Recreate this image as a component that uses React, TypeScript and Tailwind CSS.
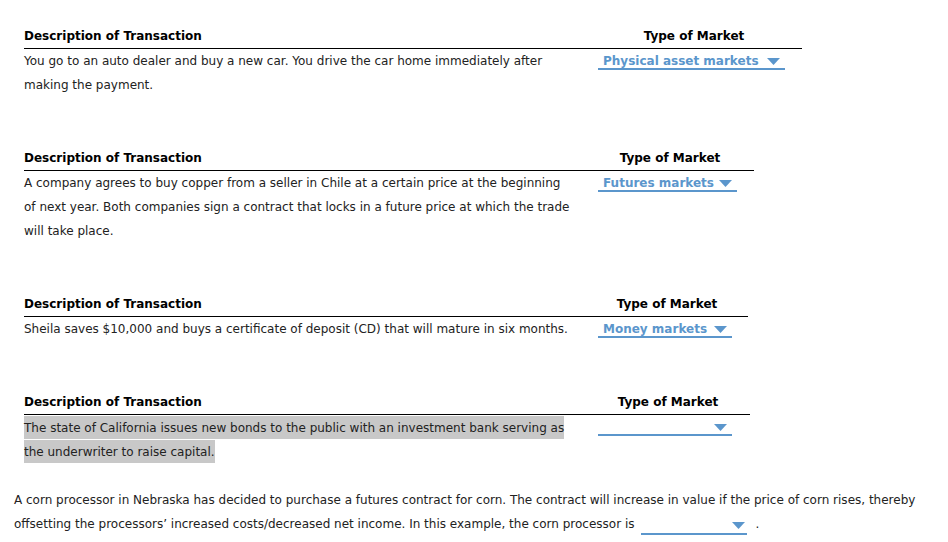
import React from 'react';

const Arrow = () => (
  <svg width="13" height="7" viewBox="0 0 13 7" className="shrink-0">
    <path d="M0 0 H13 L6.5 7 Z" fill="#5b96cc" />
  </svg>
);

interface DropProps {
  value?: string;
  width: string;
}

const Dropdown: React.FC<DropProps> = ({ value, width }) => (
  <div
    className={`mt-[5px] flex h-[16px] items-center justify-between border-b-2 border-[#5b96cc] pl-[5px] pr-[5px] ${width}`}
  >
    <span className="font-bold leading-[14px] text-[#5b96cc]">{value ?? ''}</span>
    <Arrow />
  </div>
);

interface TableProps {
  width: string;
  dropWidth: string;
  value?: string;
  className?: string;
  children: React.ReactNode;
}

const MarketTable: React.FC<TableProps> = ({ width, dropWidth, value, className = '', children }) => (
  <div className={`ml-[10px] ${width} ${className}`}>
    <div className="flex border-b border-black font-bold leading-[24px] text-black">
      <div className="w-[562px]">Description of Transaction</div>
      <div className="flex-1 text-center">Type of Market</div>
    </div>
    <div className="flex">
      <div className="w-[562px] pr-[12px] leading-[24px]">{children}</div>
      <div className="flex-1 pl-[12px]">
        <Dropdown value={value} width={dropWidth} />
      </div>
    </div>
  </div>
);

export default function App() {
  return (
    <div className="h-[542px] w-[948px] overflow-hidden bg-white pl-[14px] pt-[24px] font-['DejaVu_Sans',Verdana,sans-serif] text-[12px] text-[#222]">
      <MarketTable width="w-[778px]" dropWidth="w-[187px]" value="Physical asset markets">
        You go to an auto dealer and buy a new car. You drive the car home immediately after making the payment.
      </MarketTable>

      <MarketTable width="w-[730px]" dropWidth="w-[139px]" value="Futures markets" className="mt-[49px]">
        A company agrees to buy copper from a seller in Chile at a certain price at the beginning of next year. Both
        companies sign a contract that locks in a future price at which the trade will take place.
      </MarketTable>

      <MarketTable width="w-[724px]" dropWidth="w-[134px]" value="Money markets" className="mt-[49px]">
        Sheila saves $10,000 and buys a certificate of deposit (CD) that will mature in six months.
      </MarketTable>

      <MarketTable width="w-[726px]" dropWidth="w-[134px]" className="mt-[49px]">
        <span className="bg-[#c8c8c8] py-[4.5px] [box-decoration-break:clone]">
          The state of California issues new bonds to the public with an investment bank serving as the underwriter to
          raise capital.
        </span>
      </MarketTable>

      <p className="mt-[25px] w-[920px] leading-[24px]">
        A corn processor in Nebraska has decided to purchase a futures contract for corn. The contract will increase in
        value if the price of corn rises, thereby offsetting the processors’ increased costs/decreased net income. In
        this example, the corn processor is
        <span className="ml-[6px] inline-flex h-[14px] w-[106px] items-start justify-end border-b-2 border-[#5b96cc] pr-[2px] pt-[1px] align-[-1px]">
          <Arrow />
        </span>
        <span className="ml-[9px]">.</span>
      </p>
    </div>
  );
}
